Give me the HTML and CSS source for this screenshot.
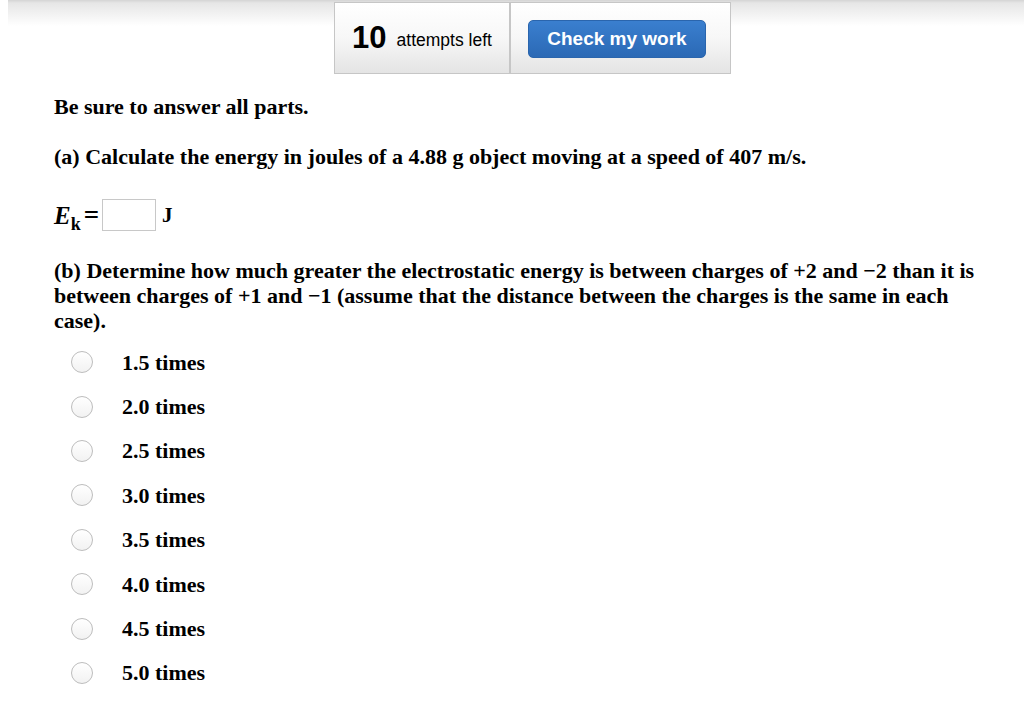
FILE: index.html
```html
<!DOCTYPE html>
<html>
  <head>
    <meta charset="UTF-8" />
    <title>Question</title>
    <link rel="stylesheet" href="styles.css">
  </head>
  <body>
    <!-- Top bar with attempts counter and submit button -->
    <div class="top-strip">
      <div class="attempts-box">
        <div class="attempts-cell">
          <span class="attempts-num">10</span>
          <span class="attempts-label">attempts left</span>
        </div>
        <div class="check-cell">
          <button class="check-button" type="button">Check my work</button>
        </div>
      </div>
    </div>

    <div class="question">
      <p class="intro">Be sure to answer all parts.</p>

      <p class="part">(a) Calculate the energy in joules of a 4.88 g object moving at a speed of 407 m/s.</p>

      <div class="answer-row">
        <span class="var">E<sub>k</sub></span>
        <span class="eq">=</span>
        <input class="answer-input" type="text" />
        <span class="unit">J</span>
      </div>

      <p class="part part-b">(b) Determine how much greater the electrostatic energy is between charges of +2 and &minus;2 than it is between charges of +1 and &minus;1 (assume that the distance between the charges is the same in each case).</p>

      <ul class="choices">
        <li><span class="radio"></span><span class="choice-text">1.5 times</span></li>
        <li><span class="radio"></span><span class="choice-text">2.0 times</span></li>
        <li><span class="radio"></span><span class="choice-text">2.5 times</span></li>
        <li><span class="radio"></span><span class="choice-text">3.0 times</span></li>
        <li><span class="radio"></span><span class="choice-text">3.5 times</span></li>
        <li><span class="radio"></span><span class="choice-text">4.0 times</span></li>
        <li><span class="radio"></span><span class="choice-text">4.5 times</span></li>
        <li><span class="radio"></span><span class="choice-text">5.0 times</span></li>
      </ul>
    </div>
  </body>
</html>
```

FILE: styles.css
```css
body {
  margin: 0;
  background: #fff;
  font-family: "Liberation Serif", "Times New Roman", serif;
  color: #000;
}

/* Gray fade along the top */
.top-strip {
  margin-left: 8px;
  padding-top: 2px;
  background: linear-gradient(to bottom, #d4d4d4 0px, #e6e6e6 3px, #fff 26px);
}
.attempts-box {
  display: flex;
  margin-left: 326px;
  width: 397px;
  height: 72px;
  border: 1px solid #c6c6c6;
  box-sizing: border-box;
  font-family: "Liberation Sans", Arial, sans-serif;
}
.attempts-cell {
  width: 174px;
  display: flex;
  align-items: center;
  justify-content: center;
  gap: 10px;
  border-right: 2px solid #c6c6c6;
  background: linear-gradient(to bottom, #fff 0%, #f7f7f7 50%, #e4e4e4 100%);
}
.attempts-num {
  font-size: 31px;
  font-weight: bold;
}
.attempts-label {
  font-size: 17.5px;
  padding-top: 4px;
}
.check-cell {
  flex: 1;
  display: flex;
  align-items: center;
  padding-left: 17px;
  background: linear-gradient(to bottom, #fff 0%, #f7f7f7 50%, #e4e4e4 100%);
}
.check-button {
  width: 178px;
  height: 38px;
  margin-top: 2px;
  border: 1px solid #2a65ad;
  border-radius: 5px;
  background: linear-gradient(to bottom, #3a7fcf, #2b69b5);
  color: #fff;
  font-family: "Liberation Sans", Arial, sans-serif;
  font-size: 19px;
  font-weight: bold;
  cursor: pointer;
}

.question {
  padding-left: 54px;
  padding-right: 34px;
  font-weight: bold;
  font-size: 22px;
  line-height: 25px;
}
.question p {
  margin: 0;
}
.question .intro {
  margin-top: 20px;
}
.question .part {
  margin-top: 25px;
}

/* E_k = [input] J */
.answer-row {
  display: flex;
  align-items: center;
  margin-top: 30px;
  height: 32px;
}
.var {
  font-style: italic;
  font-size: 25px;
}
.var sub {
  font-style: normal;
  font-size: 18px;
  line-height: 0;
}
.eq {
  font-size: 27px;
  margin: 0 3px 0 3px;
}
.answer-input {
  width: 54px;
  height: 32px;
  box-sizing: border-box;
  border: 1px solid #c8c8c8;
  margin: 0 6px 0 0;
  padding: 0;
}
.unit {
  font-size: 21px;
}

.question .part-b {
  margin-top: 27px;
}

.choices {
  list-style: none;
  margin: 7px 0 0 0;
  padding: 0;
}
.choices li {
  display: flex;
  align-items: center;
  height: 44.4px;
}
.radio {
  width: 20px;
  height: 20px;
  border: 1px solid #bdbdbd;
  border-radius: 50%;
  margin-left: 17px;
  margin-right: 29px;
  background: linear-gradient(to bottom, #fff, #f2f2f2);
}
.choice-text {
  font-size: 22px;
}
```
